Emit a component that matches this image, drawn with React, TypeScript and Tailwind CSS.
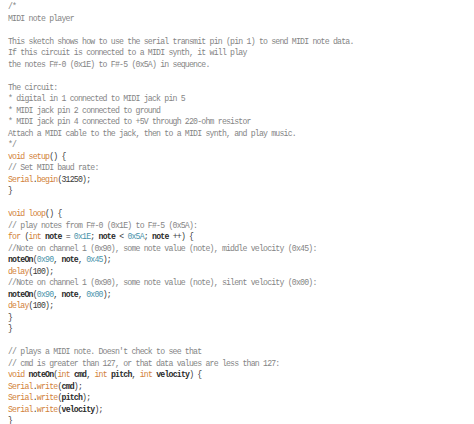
import React from "react";

type Tok = [string, string];

const C = "text-[#858585]";
const K = "text-[#d2823a]";
const N = "text-[#4a93ab]";
const I = "text-[#2a2a2a] font-semibold";
const P = "text-[#3a3a3a]";

const c = (s: string): Tok => [s, C];
const k = (s: string): Tok => [s, K];
const n = (s: string): Tok => [s, N];
const i = (s: string): Tok => [s, I];
const p = (s: string): Tok => [s, P];

const lines: Tok[][] = [
  [c("/*")],
  [c("MIDI note player")],
  [],
  [c("This sketch shows how to use the serial transmit pin (pin 1) to send MIDI note data.")],
  [c("If this circuit is connected to a MIDI synth, it will play")],
  [c("the notes F#-0 (0x1E) to F#-5 (0x5A) in sequence.")],
  [],
  [c("The circuit:")],
  [c("* digital in 1 connected to MIDI jack pin 5")],
  [c("* MIDI jack pin 2 connected to ground")],
  [c("* MIDI jack pin 4 connected to +5V through 220-ohm resistor")],
  [c("Attach a MIDI cable to the jack, then to a MIDI synth, and play music.")],
  [c("*/")],
  [k("void"), p(" "), k("setup"), p("() {")],
  [c("// Set MIDI baud rate:")],
  [k("Serial"), p("."), k("begin"), p("(31250);")],
  [p("}")],
  [],
  [k("void"), p(" "), k("loop"), p("() {")],
  [c("// play notes from F#-0 (0x1E) to F#-5 (0x5A):")],
  [k("for"), p(" ("), k("int"), p(" "), i("note"), p(" = "), n("0x1E"), p("; "), i("note"), p(" < "), n("0x5A"), p("; "), i("note"), p(" ++) {")],
  [c("//Note on channel 1 (0x90), some note value (note), middle velocity (0x45):")],
  [i("noteOn"), p("("), n("0x90"), p(", "), i("note"), p(", "), n("0x45"), p(");")],
  [k("delay"), p("(100);")],
  [c("//Note on channel 1 (0x90), some note value (note), silent velocity (0x00):")],
  [i("noteOn"), p("("), n("0x90"), p(", "), i("note"), p(", "), n("0x00"), p(");")],
  [k("delay"), p("(100);")],
  [p("}")],
  [p("}")],
  [],
  [c("// plays a MIDI note. Doesn't check to see that")],
  [c("// cmd is greater than 127, or that data values are less than 127:")],
  [k("void"), p(" "), i("noteOn"), p("("), k("int"), p(" "), i("cmd"), p(", "), k("int"), p(" "), i("pitch"), p(", "), k("int"), p(" "), i("velocity"), p(") {")],
  [k("Serial"), p("."), k("write"), p("("), i("cmd"), p(");")],
  [k("Serial"), p("."), k("write"), p("("), i("pitch"), p(");")],
  [k("Serial"), p("."), k("write"), p("("), i("velocity"), p(");")],
  [p("}")],
];

export default function App() {
  return (
    <div className="w-[474px] h-[424px] bg-white overflow-hidden pl-[8px] pt-[1px] font-['Liberation_Mono',monospace] text-[8.2px] tracking-[-0.8px] leading-[11.5px]">
      {lines.map((toks, li) => (
        <div key={li} className="h-[11.5px] whitespace-pre">
          {toks.map(([s, cls], ti) => (
            <span key={ti} className={cls}>
              {s}
            </span>
          ))}
        </div>
      ))}
    </div>
  );
}
